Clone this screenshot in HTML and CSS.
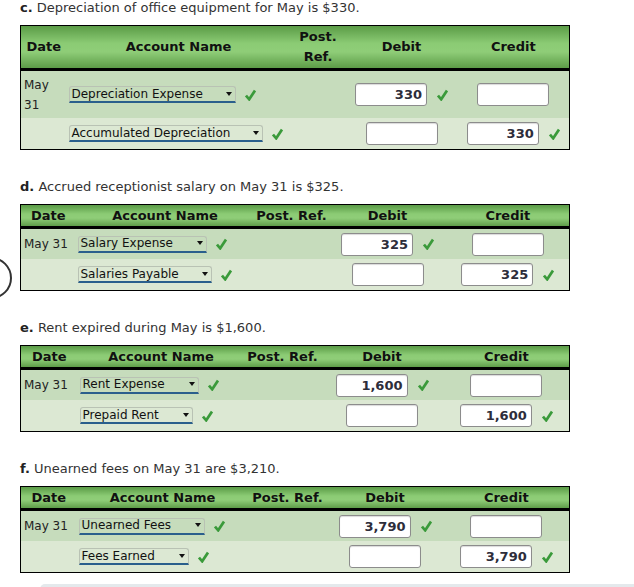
FILE: index.html
```
<!DOCTYPE html>
<html lang="en">
<head>
    <meta charset="UTF-8">
    <title>Adjusting Entries</title>
    <link rel="stylesheet" href="styles.css">
</head>
<body>

<div class="side-circle"></div>

<div class="page">

    <!-- c. Depreciation -->
    <div class="entry first">
        <p class="prompt"><b>c.</b> Depreciation of office equipment for May is $330.</p>
        <table class="journal journal-c">
            <colgroup>
                <col class="c-date"><col class="c-acct"><col class="c-ref"><col class="c-debit"><col class="c-credit">
            </colgroup>
            <thead>
                <tr class="tall">
                    <th>Date</th>
                    <th>Account Name</th>
                    <th>Post.<br>Ref.</th>
                    <th>Debit</th>
                    <th>Credit</th>
                </tr>
            </thead>
            <tbody>
                <tr class="row-a tall">
                    <td class="date two-line">May<br>31</td>
                    <td class="acct"><div class="dropdown w-167">Depreciation Expense<span class="arrow"></span></div><span class="check"></span></td>
                    <td></td>
                    <td class="amount"><input class="money" type="text" value="330" readonly><span class="check"></span></td>
                    <td class="amount"><input class="money" type="text" value="" readonly></td>
                </tr>
                <tr class="row-b">
                    <td class="date"></td>
                    <td class="acct"><div class="dropdown w-194">Accumulated Depreciation<span class="arrow"></span></div><span class="check"></span></td>
                    <td></td>
                    <td class="amount"><input class="money" type="text" value="" readonly></td>
                    <td class="amount"><input class="money" type="text" value="330" readonly><span class="check"></span></td>
                </tr>
            </tbody>
        </table>
    </div>

    <!-- d. Accrued salary -->
    <div class="entry">
        <p class="prompt"><b>d.</b> Accrued receptionist salary on May 31 is $325.</p>
        <table class="journal journal-d">
            <colgroup>
                <col class="d-date"><col class="d-acct"><col class="d-ref"><col class="d-debit"><col class="d-credit">
            </colgroup>
            <thead>
                <tr>
                    <th>Date</th>
                    <th>Account Name</th>
                    <th>Post. Ref.</th>
                    <th>Debit</th>
                    <th>Credit</th>
                </tr>
            </thead>
            <tbody>
                <tr class="row-a">
                    <td class="date">May 31</td>
                    <td class="acct"><div class="dropdown w-129">Salary Expense<span class="arrow"></span></div><span class="check"></span></td>
                    <td></td>
                    <td class="amount"><input class="money" type="text" value="325" readonly><span class="check"></span></td>
                    <td class="amount"><input class="money" type="text" value="" readonly></td>
                </tr>
                <tr class="row-b">
                    <td class="date"></td>
                    <td class="acct"><div class="dropdown w-134">Salaries Payable<span class="arrow"></span></div><span class="check"></span></td>
                    <td></td>
                    <td class="amount"><input class="money" type="text" value="" readonly></td>
                    <td class="amount"><input class="money" type="text" value="325" readonly><span class="check"></span></td>
                </tr>
            </tbody>
        </table>
    </div>

    <!-- e. Rent expired -->
    <div class="entry">
        <p class="prompt"><b>e.</b> Rent expired during May is $1,600.</p>
        <table class="journal journal-e">
            <colgroup>
                <col class="e-date"><col class="e-acct"><col class="e-ref"><col class="e-debit"><col class="e-credit">
            </colgroup>
            <thead>
                <tr>
                    <th>Date</th>
                    <th>Account Name</th>
                    <th>Post. Ref.</th>
                    <th>Debit</th>
                    <th>Credit</th>
                </tr>
            </thead>
            <tbody>
                <tr class="row-a">
                    <td class="date">May 31</td>
                    <td class="acct"><div class="dropdown w-119">Rent Expense<span class="arrow"></span></div><span class="check"></span></td>
                    <td></td>
                    <td class="amount"><input class="money" type="text" value="1,600" readonly><span class="check"></span></td>
                    <td class="amount"><input class="money" type="text" value="" readonly></td>
                </tr>
                <tr class="row-b">
                    <td class="date"></td>
                    <td class="acct"><div class="dropdown w-113">Prepaid Rent<span class="arrow"></span></div><span class="check"></span></td>
                    <td></td>
                    <td class="amount"><input class="money" type="text" value="" readonly></td>
                    <td class="amount"><input class="money" type="text" value="1,600" readonly><span class="check"></span></td>
                </tr>
            </tbody>
        </table>
    </div>

    <!-- f. Unearned fees -->
    <div class="entry">
        <p class="prompt"><b>f.</b> Unearned fees on May 31 are $3,210.</p>
        <table class="journal journal-f">
            <colgroup>
                <col class="f-date"><col class="f-acct"><col class="f-ref"><col class="f-debit"><col class="f-credit">
            </colgroup>
            <thead>
                <tr>
                    <th>Date</th>
                    <th>Account Name</th>
                    <th>Post. Ref.</th>
                    <th>Debit</th>
                    <th>Credit</th>
                </tr>
            </thead>
            <tbody>
                <tr class="row-a">
                    <td class="date">May 31</td>
                    <td class="acct"><div class="dropdown w-126">Unearned Fees<span class="arrow"></span></div><span class="check"></span></td>
                    <td></td>
                    <td class="amount"><input class="money" type="text" value="3,790" readonly><span class="check"></span></td>
                    <td class="amount"><input class="money" type="text" value="" readonly></td>
                </tr>
                <tr class="row-b">
                    <td class="date"></td>
                    <td class="acct"><div class="dropdown w-110">Fees Earned<span class="arrow"></span></div><span class="check"></span></td>
                    <td></td>
                    <td class="amount"><input class="money" type="text" value="" readonly></td>
                    <td class="amount"><input class="money" type="text" value="3,790" readonly><span class="check"></span></td>
                </tr>
            </tbody>
        </table>
    </div>

    <div class="footer-panel"></div>
</div>

</body>
</html>
```

FILE: styles.css
```
/* General Styles */
body {
    font-family: "DejaVu Sans", Verdana, sans-serif;
    background-color: #ffffff;
    color: #333;
    margin: 0;
    padding: 0;
    overflow: hidden;
}

.page {
    padding-left: 20px;
}

.side-circle {
    position: absolute;
    left: -30px;
    top: 257px;
    width: 38px;
    height: 38px;
    border: 2px solid #333;
    border-radius: 50%;
}

.entry {
    margin-top: 29px;
}

.entry.first {
    margin-top: 0;
}

.prompt {
    margin: 0 0 9px 0;
    font-size: 13px;
    line-height: 16px;
    color: #333;
}

.prompt b {
    color: #222;
}

/* Journal table */
.journal {
    width: 549px;
    table-layout: fixed;
    border-collapse: collapse;
    border: 1px solid #000;
    font-size: 12px;
}

.journal th {
    height: 21px;
    padding: 0;
    font-size: 13px;
    font-weight: bold;
    color: #111;
    text-align: center;
    line-height: 20px;
    background: linear-gradient(#5c9d48, #8bcb74 40%, #8fcd78 60%, #5b9a46);
    border-bottom: 3px solid #000;
}

.journal thead tr.tall th {
    height: 42px;
}

.journal td {
    padding: 0;
    height: 30px;
    vertical-align: middle;
    white-space: nowrap;
}

.journal tr.row-b td {
    height: 31px;
}

.journal tr.row-a.tall td {
    height: 47px;
}

.row-a td {
    background-color: #c6dcbc;
}

.row-b td {
    background-color: #dce8d3;
}

.date {
    padding-left: 3px !important;
    color: #222;
    font-size: 12px;
}

.date.two-line {
    line-height: 20px;
}

.acct {
    padding-left: 2px !important;
}

.amount {
    text-align: center;
}

/* Dropdown */
.dropdown {
    display: inline-flex;
    align-items: center;
    justify-content: space-between;
    box-sizing: border-box;
    height: 17px;
    padding: 0 2px 1px 2px;
    border: 1px solid #b9c2b4;
    border-bottom: 2px solid #2a5f8c;
    border-radius: 3px 3px 0 0;
    font-size: 12px;
    color: #111;
    vertical-align: middle;
}

.arrow {
    width: 0;
    height: 0;
    border-left: 3px solid transparent;
    border-right: 3px solid transparent;
    border-top: 4px solid #111;
    margin-right: 1px;
}

.w-167 { width: 167px; }
.w-194 { width: 194px; }
.w-129 { width: 129px; }
.w-134 { width: 134px; }
.w-119 { width: 119px; }
.w-113 { width: 113px; }
.w-126 { width: 126px; }
.w-110 { width: 110px; }

/* Check mark */
.check {
    display: inline-block;
    width: 11px;
    height: 12px;
    margin-left: 9px;
    vertical-align: middle;
    background: url("data:image/svg+xml,%3Csvg xmlns='http://www.w3.org/2000/svg' viewBox='0 0 11 12'%3E%3Cpath d='M1 6.5 L4.2 10.3 L10 1.5' fill='none' stroke='%233a9a3a' stroke-width='2.7'/%3E%3C/svg%3E") no-repeat center;
}

.amount .check {
    margin-left: 10px;
}

/* Amount inputs */
.money {
    box-sizing: border-box;
    width: 72px;
    height: 23px;
    padding: 0 4px 0 0;
    border: 1px solid #8c8c8c;
    border-radius: 3px;
    box-shadow: inset 0 1px 1px rgba(0, 0, 0, 0.15);
    background-color: #ffffff;
    font-family: "DejaVu Sans", Verdana, sans-serif;
    font-size: 13px;
    font-weight: bold;
    color: #2d2d3a;
    text-align: right;
    vertical-align: middle;
    outline: none;
}

/* Column widths */
.c-date { width: 46px; }
.c-acct { width: 224px; }
.c-ref { width: 55px; }
.c-debit { width: 112px; }
.c-credit { width: 112px; }

.d-date { width: 55px; }
.d-acct { width: 179px; }
.d-ref { width: 74px; }
.d-debit { width: 118px; }
.d-credit { width: 123px; }

.e-date { width: 57px; }
.e-acct { width: 167px; }
.e-ref { width: 76px; }
.e-debit { width: 123px; }
.e-credit { width: 126px; }

.f-date { width: 56px; }
.f-acct { width: 172px; }
.f-ref { width: 78px; }
.f-debit { width: 117px; }
.f-credit { width: 126px; }

.footer-panel {
    margin: 11px 0 0 20px;
    height: 40px;
    background-color: #e4e9ec;
    border-radius: 5px 0 0 0;
}
```
